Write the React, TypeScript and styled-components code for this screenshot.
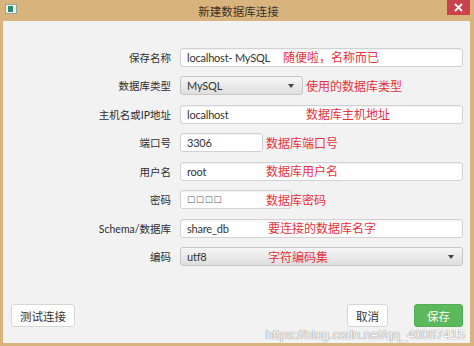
import React from 'react'
import styled, { createGlobalStyle } from 'styled-components'

const GlobalStyle = createGlobalStyle`
  html, body {
    margin: 0;
    padding: 0;
  }
  body {
    font-family: 'Lato', 'Noto Sans CJK SC', sans-serif;
  }
`

type Field = {
  label: string
  value: string
  kind: 'input' | 'select'
  width?: number
  note: string
  noteLeft: number
  masked?: boolean
}

const fields: Field[] = [
  { label: '保存名称', value: 'localhost- MySQL', kind: 'input', note: '随便啦，名称而已', noteLeft: 103 },
  { label: '数据库类型', value: 'MySQL', kind: 'select', width: 123, note: '使用的数据库类型', noteLeft: 126 },
  { label: '主机名或IP地址', value: 'localhost', kind: 'input', note: '数据库主机地址', noteLeft: 126 },
  { label: '端口号', value: '3306', kind: 'input', width: 83, note: '数据库端口号', noteLeft: 86 },
  { label: '用户名', value: 'root', kind: 'input', note: '数据库用户名', noteLeft: 86 },
  { label: '密码', value: '□□□□', kind: 'input', width: 112, note: '数据库密码', noteLeft: 86, masked: true },
  { label: 'Schema/数据库', value: 'share_db', kind: 'input', note: '要连接的数据库名字', noteLeft: 88 },
  { label: '编码', value: 'utf8', kind: 'select', note: '字符编码集', noteLeft: 88 },
]

export default function App() {
  return (
    <Window>
      <GlobalStyle />
      <TitleBar>
        <AppIcon width="12" height="10" viewBox="0 0 12 10">
          <rect x="0.5" y="0.5" width="11" height="9" fill="#e9efe9" stroke="#8fa79a" />
          <rect x="3" y="2" width="5" height="6" fill="#2f8a6c" />
        </AppIcon>
        <Title>新建数据库连接</Title>
        <CloseButton>
          <svg width="9" height="9" viewBox="0 0 9 9">
            <path d="M1 1 L8 8 M8 1 L1 8" stroke="#fff" strokeWidth="1.8" />
          </svg>
        </CloseButton>
      </TitleBar>
      <Body>
        <Form>
          {fields.map((f) => (
            <React.Fragment key={f.label}>
              <Label>{f.label}</Label>
              <FieldCell>
                {f.kind === 'input' ? (
                  <TextBox $width={f.width} $masked={f.masked}>{f.value}</TextBox>
                ) : (
                  <SelectBox $width={f.width}>
                    {f.value}
                    <Caret />
                  </SelectBox>
                )}
                <Note $left={f.noteLeft}>{f.note}</Note>
              </FieldCell>
            </React.Fragment>
          ))}
        </Form>
        <Footer>
          <Button>测试连接</Button>
          <Spacer />
          <Button>取消</Button>
          <PrimaryButton>保存</PrimaryButton>
        </Footer>
        <Watermark>https://blog.csdn.net/qq_40087415</Watermark>
      </Body>
    </Window>
  )
}

const Window = styled.div`
  width: 474px;
  height: 346px;
  background: #d8b47c;
  display: flex;
  flex-direction: column;
  padding: 0 4px 3px 3px;
  box-sizing: border-box;
`

const TitleBar = styled.div`
  height: 21px;
  display: flex;
  align-items: center;
  position: relative;
`

const AppIcon = styled.svg`
  position: absolute;
  left: 2px;
  top: 4px;
`

const Title = styled.div`
  flex: 1;
  text-align: center;
  font-family: 'Noto Sans CJK SC', sans-serif;
  font-size: 11.5px;
  color: #3a3328;
  padding-left: 4px;
`

const CloseButton = styled.div`
  position: absolute;
  right: 0;
  top: 0;
  width: 23px;
  height: 15px;
  background: #c8434b;
  display: flex;
  align-items: center;
  justify-content: center;
`

const Body = styled.div`
  flex: 1;
  background: #f2f2f2;
  display: flex;
  flex-direction: column;
  position: relative;
  padding: 22px 7px 16px 0;
`

const Form = styled.div`
  display: grid;
  grid-template-columns: 168px 1fr;
  grid-auto-rows: 28.5px;
  column-gap: 9px;
  align-items: center;
`

const Label = styled.div`
  text-align: right;
  font-family: 'Lato', 'Noto Sans CJK SC', sans-serif;
  font-size: 10.5px;
  color: #2e2e2e;
`

const FieldCell = styled.div`
  position: relative;
  height: 19px;
`

const TextBox = styled.div<{ $width?: number; $masked?: boolean }>`
  width: ${(p) => (p.$width ? `${p.$width}px` : '100%')};
  height: 19px;
  box-sizing: border-box;
  background: #fff;
  border: 1px solid #d2d2d2;
  border-radius: 3px;
  box-shadow: inset 0 1px 1px rgba(0, 0, 0, 0.06);
  padding: 0 6px;
  font-family: ${(p) => (p.$masked ? "'DejaVu Sans', sans-serif" : "'Lato', 'Noto Sans CJK SC', sans-serif")};
  font-size: ${(p) => (p.$masked ? '8.5px' : '11px')};
  letter-spacing: ${(p) => (p.$masked ? '0.8px' : '-0.2px')};
  color: ${(p) => (p.$masked ? '#555' : '#333')};
  line-height: 17px;
`

const SelectBox = styled.div<{ $width?: number }>`
  width: ${(p) => (p.$width ? `${p.$width}px` : '100%')};
  height: 19px;
  box-sizing: border-box;
  background: linear-gradient(#f6f6f6, #dedede);
  border: 1px solid #c6c6c6;
  border-radius: 3px;
  padding: 0 6px;
  font-family: 'Lato', 'Noto Sans CJK SC', sans-serif;
  font-size: 11px;
  letter-spacing: -0.2px;
  color: #333;
  line-height: 17px;
  position: relative;
`

const Caret = styled.span`
  position: absolute;
  right: 8px;
  top: 7px;
  border-left: 3px solid transparent;
  border-right: 3px solid transparent;
  border-top: 4px solid #444;
`

const Note = styled.span<{ $left: number }>`
  position: absolute;
  left: ${(p) => p.$left}px;
  top: 50%;
  transform: translateY(-52%);
  font-family: 'Noto Sans CJK SC', sans-serif;
  font-size: 12px;
  color: #e8313b;
  white-space: nowrap;
`

const Footer = styled.div`
  margin-top: auto;
  display: flex;
  align-items: center;
  gap: 26px;
  padding-left: 8px;
`

const Spacer = styled.div`
  flex: 1;
`

const Button = styled.div`
  height: 23px;
  box-sizing: border-box;
  padding: 0 8px;
  background: #fff;
  border: 1px solid #d6d6d6;
  border-radius: 3px;
  font-family: 'Noto Sans CJK SC', sans-serif;
  font-size: 11.5px;
  color: #333;
  display: flex;
  align-items: center;
`

const PrimaryButton = styled(Button)`
  width: 49px;
  justify-content: center;
  background: #5cb85c;
  border-color: #54ad54;
  color: #fff;
`

const Watermark = styled.div`
  position: absolute;
  right: 5px;
  bottom: 1px;
  font-family: 'Liberation Sans', sans-serif;
  font-size: 13px;
  color: #fafafa;
  text-shadow: 0 0 1px #8a8a8a, 0 0 1px #8a8a8a;
`
